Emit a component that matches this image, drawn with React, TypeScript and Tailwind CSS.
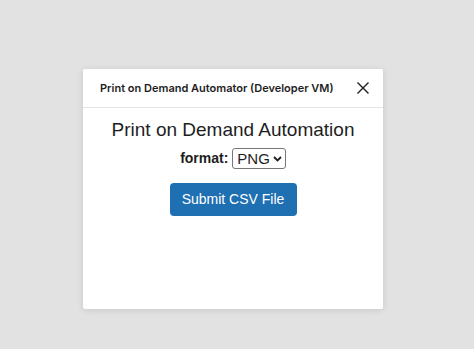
import React from 'react';

export default function App() {
  return (
    <div className="flex h-[349px] w-[474px] items-start justify-center bg-[#e2e2e2] pt-[69px]" style={{ fontFamily: 'Inter, "Liberation Sans", sans-serif' }}>
      <div className="ml-[-8px] flex h-[240px] w-[300px] flex-col rounded-[2px] bg-white shadow-[0_1px_6px_rgba(0,0,0,0.12)]">
        <div className="flex h-[39px] items-center justify-between border-b border-[#e4e4e4] pl-[17px] pr-[13px]">
          <span className="text-[11px] font-semibold text-[#1e1e1e]">Print on Demand Automator (Developer VM)</span>
          <svg width="14" height="14" viewBox="0 0 14 14" fill="none" stroke="#1e1e1e" strokeWidth="1.4">
            <path d="M1.5 1.5l11 11M12.5 1.5l-11 11" />
          </svg>
        </div>
        <div className="flex flex-col items-center pt-[11px]" style={{ fontFamily: '"Liberation Sans", Arial, sans-serif' }}>
          <h1 className="text-[19px] leading-[22px] text-[#1e1e1e]">Print on Demand Automation</h1>
          <div className="mt-[7px] flex items-center gap-[4px]">
            <span className="text-[14px] font-bold text-[#1e1e1e]">format:</span>
            <div className="flex h-[21px] items-center gap-[3px] rounded-[3px] border border-[#767676] pl-[4px] pr-[3px]">
              <span className="text-[15px] leading-none text-[#1e1e1e]">PNG</span>
              <svg width="9" height="6" viewBox="0 0 9 6" fill="none" stroke="#1e1e1e" strokeWidth="1.8">
                <path d="M1 1l3.5 3.5L8 1" />
              </svg>
            </div>
          </div>
          <button className="mt-[14px] h-[33px] w-[127px] rounded-[4px] bg-[#1f6fb3] text-[14px] text-white">Submit CSV File</button>
        </div>
      </div>
    </div>
  );
}
